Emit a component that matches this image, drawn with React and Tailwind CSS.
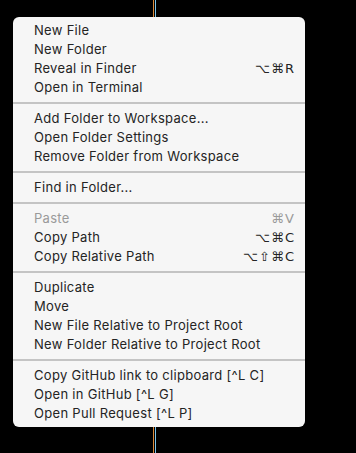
export default function App() {
  const groups = [
    [
      ["New File"],
      ["New Folder"],
      ["Reveal in Finder", "⌥⌘R"],
      ["Open in Terminal"],
    ],
    [
      ["Add Folder to Workspace..."],
      ["Open Folder Settings"],
      ["Remove Folder from Workspace"],
    ],
    [["Find in Folder..."]],
    [
      ["Paste", "⌘V", true],
      ["Copy Path", "⌥⌘C"],
      ["Copy Relative Path", "⌥⇧⌘C"],
    ],
    [
      ["Duplicate"],
      ["Move"],
      ["New File Relative to Project Root"],
      ["New Folder Relative to Project Root"],
    ],
    [
      ["Copy GitHub link to clipboard [^L C]"],
      ["Open in GitHub [^L G]"],
      ["Open Pull Request [^L P]"],
    ],
  ];
  return (
    <div className="w-[356px] h-[453px] bg-black flex flex-col overflow-hidden" style={{ fontFamily: "Inter, 'Noto Sans', sans-serif" }}>
      <div className="h-[17px] flex shrink-0">
        <div className="w-[153px]" />
        <div className="w-px bg-[#d98a3a]" />
        <div className="w-px" />
        <div className="w-px bg-[#7cc3e8]" />
      </div>
      <div className="ml-[13px] w-[292px] h-[410px] bg-[#f6f6f6] rounded-[6px] py-[4px] flex flex-col shrink-0">
        {groups.map((g, gi) => (
          <div key={gi} className="flex flex-col">
            {gi > 0 && <div className="h-[2px] bg-[#c4c4c4] my-[5px]" />}
            {g.map(([label, sc, dis], i) => (
              <div key={i} className={`h-[19px] flex items-center justify-between pl-[21px] pr-[10px] text-[13px] ${dis ? "text-[#9a9a9a]" : "text-[#242424]"}`}>
                <span className="tracking-[0.3px]">{label}</span>
                {sc && <span className="tracking-[1px]" style={{ fontFamily: "'DejaVu Sans', Inter, sans-serif", fontSize: "13px" }}>{sc}</span>}
              </div>
            ))}
          </div>
        ))}
      </div>
      <div className="flex flex-1">
        <div className="w-[153px]" />
        <div className="w-px bg-[#d98a3a]" />
        <div className="w-px" />
        <div className="w-px bg-[#7cc3e8]" />
      </div>
    </div>
  );
}
